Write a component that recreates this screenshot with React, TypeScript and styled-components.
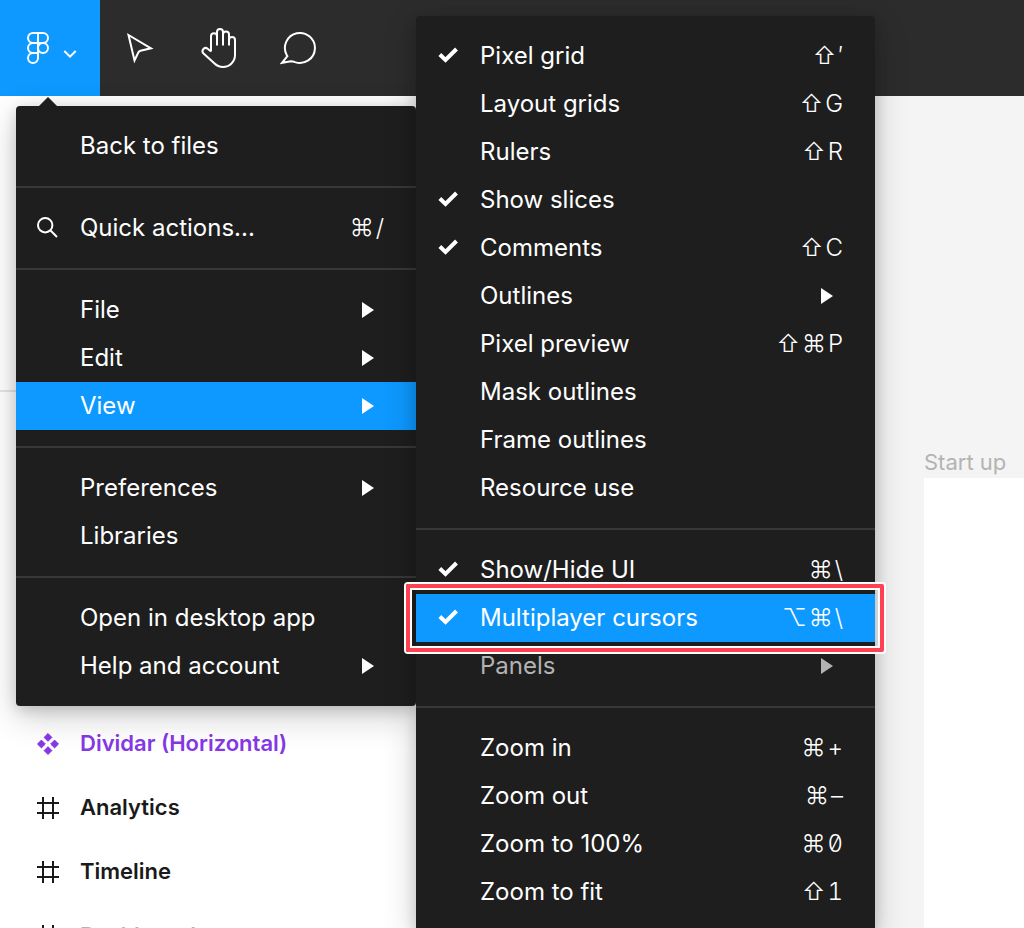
import React from "react";
import styled, { createGlobalStyle, css } from "styled-components";

const GlobalStyle = createGlobalStyle`
  *, *::before, *::after { box-sizing: border-box; }
  body { margin: 0; background: #fff; color: #1a1a1a; font-family: Inter, "Liberation Sans", sans-serif; }
  button { font: inherit; color: inherit; border: 0; background: none; padding: 0; margin: 0; }
`;

const Shell = styled.div`
  position: relative;
  display: flex;
  flex-direction: column;
  height: 100vh;
  overflow: hidden;
`;

const Toolbar = styled.header`
  display: flex;
  flex: none;
  height: 96px;
  background: #2c2c2c;
  color: #fff;
`;

const ToolButton = styled.button<{ $active?: boolean }>`
  display: flex;
  align-items: center;
  justify-content: center;
  gap: 14px;
  width: ${(p) => (p.$active ? 100 : 80)}px;
  padding-left: ${(p) => (p.$active ? 4 : 0)}px;
  background: ${(p) => (p.$active ? "#0d99ff" : "transparent")};
`;

const Workspace = styled.div`
  display: flex;
  flex: 1;
  min-height: 0;
`;

const SidePanel = styled.aside`
  flex: none;
  width: 480px;
  background: #fff;
`;

const Pages = styled.section`
  height: 296px;
  border-bottom: 2px solid #e5e5e5;
`;

const Layers = styled.ul`
  list-style: none;
  margin: 0;
  padding: 320px 0 0;
`;

const Layer = styled.li<{ $tone?: "component" | "faded" }>`
  display: flex;
  align-items: center;
  gap: 20px;
  height: 64px;
  padding-left: 36px;
  font-size: 22px;
  font-weight: 600;
  color: ${(p) => (p.$tone === "component" ? "#8638e5" : "#1a1a1a")};
  span {
    padding-bottom: 2px;
    color: ${(p) => (p.$tone === "faded" ? "#b3b3b3" : "inherit")};
  }
`;

const Canvas = styled.main`
  display: flex;
  flex-direction: column;
  flex: 1;
  min-width: 0;
  padding: 350px 0 0 444px;
  background: #f4f4f4;
`;

const FrameTitle = styled.h2`
  margin: 0;
  font-size: 22px;
  font-weight: 400;
  line-height: 32px;
  color: #b3b3b3;
  white-space: nowrap;
`;

const Artboard = styled.div`
  flex: 1;
  background: #fff;
`;

const Menu = styled.nav<{ $level: "main" | "sub" }>`
  position: absolute;
  background: #1e1e1e;
  color: #fff;
  border-radius: 4px;
  box-shadow: 0 4px 14px rgba(0, 0, 0, 0.15), 0 10px 34px rgba(0, 0, 0, 0.2);
  ${(p) =>
    p.$level === "main"
      ? css`
          top: 106px;
          left: 16px;
          width: 400px;
          &::before {
            content: "";
            position: absolute;
            top: -9px;
            left: 23px;
            border: 9px solid transparent;
            border-top: 0;
            border-bottom-color: #1e1e1e;
          }
        `
      : css`
          top: 16px;
          left: 416px;
          width: 459px;
        `}
`;

const Group = styled.div`
  padding: 16px 0;
  & + & { border-top: 2px solid #383838; }
`;

const Item = styled.button<{ $on?: boolean; $dim?: boolean }>`
  position: relative;
  display: grid;
  grid-template-columns: 64px 1fr auto;
  align-items: center;
  width: 100%;
  height: 48px;
  padding: 0 32px 2px 0;
  text-align: left;
  font-size: 24px;
  font-weight: 400;
  background: ${(p) => (p.$on ? "#0d99ff" : "transparent")};
  color: ${(p) => (p.$dim ? "#b3b3b3" : "#fff")};
`;

const Lead = styled.span`
  display: flex;
  justify-content: center;
`;

const Keys = styled.span`
  display: flex;
  gap: 2px;
  font-weight: 300;
  font-feature-settings: "tnum", "zero";
  kbd { font: inherit; }
`;

const More = styled.svg`
  margin: 2px 10px 0 0;
  display: block;
`;

const Callout = styled.span`
  position: absolute;
  z-index: 1;
  inset: -12px -11px -12px -12px;
  border: 2px solid #fff;
  border-radius: 4px;
  &::before {
    content: "";
    position: absolute;
    inset: 0;
    border: 4px solid #ff4152;
    border-radius: 2px;
  }
  &::after {
    content: "";
    position: absolute;
    inset: 4px;
    border: 2px solid #fff;
  }
`;

const Check = () => (
  <svg width="20" height="16" viewBox="0 0 20 16" fill="none" stroke="#fff" strokeWidth="4">
    <path d="M1.800 7.500 7.500 13 18.500 2" />
  </svg>
);

const Search = () => (
  <svg width="22" height="22" viewBox="0 0 22 22" fill="none" stroke="#fff" strokeWidth="2">
    <circle cx="8.200" cy="9.200" r="7.200" />
    <path d="M13.300 14.300l6.700 6.700" />
  </svg>
);

const FrameIcon = () => (
  <svg width="24" height="24" viewBox="0 0 24 24" stroke="#1a1a1a" strokeWidth="2">
    <path d="M7 1v22M17 1v22M1 7h22M1 17h22" />
  </svg>
);

const ComponentIcon = () => (
  <svg width="24" height="24" viewBox="0 0 24 24" fill="#8638e5" stroke="#8638e5" strokeWidth="1" strokeLinejoin="round">
    <path d="M12 1.500l3.900 3.900L12 9.300 8.100 5.400zM12 14.700l3.900 3.900L12 22.500l-3.900-3.900zM5.400 8.100L9.300 12l-3.900 3.900L1.500 12zM18.600 8.100L22.500 12l-3.900 3.900-3.900-3.900z" />
  </svg>
);

type Entry = {
  label: string;
  keys?: string[];
  more?: boolean;
  checked?: boolean;
  search?: boolean;
  on?: boolean;
  dim?: boolean;
  callout?: boolean;
};

const mainMenu: Entry[][] = [
  [{ label: "Back to files" }],
  [{ label: "Quick actions...", keys: ["⌘", "/"], search: true }],
  [
    { label: "File", more: true },
    { label: "Edit", more: true },
    { label: "View", more: true, on: true },
  ],
  [{ label: "Preferences", more: true }, { label: "Libraries" }],
  [{ label: "Open in desktop app" }, { label: "Help and account", more: true }],
];

const viewMenu: Entry[][] = [
  [
    { label: "Pixel grid", keys: ["⇧", "′"], checked: true },
    { label: "Layout grids", keys: ["⇧", "G"] },
    { label: "Rulers", keys: ["⇧", "R"] },
    { label: "Show slices", checked: true },
    { label: "Comments", keys: ["⇧", "C"], checked: true },
    { label: "Outlines", more: true },
    { label: "Pixel preview", keys: ["⇧", "⌘", "P"] },
    { label: "Mask outlines" },
    { label: "Frame outlines" },
    { label: "Resource use" },
  ],
  [
    { label: "Show/Hide UI", keys: ["⌘", "\\"], checked: true },
    { label: "Multiplayer cursors", keys: ["⌥", "⌘", "\\"], checked: true, on: true, callout: true },
    { label: "Panels", more: true, dim: true },
  ],
  [
    { label: "Zoom in", keys: ["⌘", "+"] },
    { label: "Zoom out", keys: ["⌘", "–"] },
    { label: "Zoom to 100%", keys: ["⌘", "0"] },
    { label: "Zoom to fit", keys: ["⇧", "1"] },
  ],
];

const MenuList = ({ level, groups, label }: { level: "main" | "sub"; groups: Entry[][]; label: string }) => (
  <Menu $level={level} aria-label={label}>
    {groups.map((group, i) => (
      <Group key={i}>
        {group.map((e) => (
          <Item key={e.label} type="button" $on={e.on} $dim={e.dim} disabled={e.dim}>
            <Lead>
              {e.checked && <Check />}
              {e.search && <Search />}
            </Lead>
            <span>{e.label}</span>
            {e.keys && (
              <Keys>
                {e.keys.map((k) => (
                  <kbd key={k}>{k}</kbd>
                ))}
              </Keys>
            )}
            {e.more && (
              <More width="12" height="16" viewBox="0 0 12 16" fill="currentColor">
                <path d="M0 0l12 8-12 8z" />
              </More>
            )}
            {e.callout && <Callout />}
          </Item>
        ))}
      </Group>
    ))}
  </Menu>
);

export default function App() {
  return (
    <Shell>
      <GlobalStyle />
      <Toolbar>
        <ToolButton $active type="button" aria-label="Main menu">
          <svg width="22" height="32" viewBox="0 0 22 32" fill="none" stroke="#fff" strokeWidth="2">
            <path d="M11 1H6a5 5 0 0 0 0 10h5zM11 1h5a5 5 0 0 1 0 10h-5M11 11H6a5 5 0 0 0 0 10h5M11 21H6a5 5 0 1 0 5 5V11" />
            <circle cx="16" cy="16" r="5" />
          </svg>
          <svg width="14" height="20" viewBox="0 0 14 20" fill="none" stroke="#fff" strokeWidth="2">
            <path d="M1.300 13L7 18.600 12.700 13" />
          </svg>
        </ToolButton>
        <ToolButton type="button" aria-label="Move">
          <svg width="40" height="40" viewBox="0 0 40 40" fill="none" stroke="#fff" strokeWidth="2">
            <path d="M8.500 7L31 20.300 20.500 22.800Q19 23.200 18.300 24.500L14.500 32.500Z" />
          </svg>
        </ToolButton>
        <ToolButton type="button" aria-label="Hand">
          <svg width="40" height="44" viewBox="0 0 40 44" fill="none" stroke="#fff" strokeWidth="2">
            <path d="M11 25.500V10.300a3 3 0 0 1 6 0V19.500M17 10.300V6a3 3 0 0 1 6 0V19.500M23 8.500a3 3 0 0 1 6 0V19.500M29 14a3 3 0 0 1 6 0V29a12 12 0 0 1-12 12q-5 0-9-4L3.300 27.300A3.200 3.200 0 0 1 7.700 22.700L11 25.500" />
          </svg>
        </ToolButton>
        <ToolButton type="button" aria-label="Comment">
          <svg width="40" height="40" viewBox="0 0 40 40" fill="none" stroke="#fff" strokeWidth="2">
            <path d="M7.400 28.100L2 34.800 11 33.300Q13 33.300 15 34.100A15 15 0 1 0 6.700 27z" />
          </svg>
        </ToolButton>
      </Toolbar>
      <Workspace>
        <SidePanel>
          <Pages />
          <Layers>
            <Layer $tone="component"><ComponentIcon /><span>Dividar (Horizontal)</span></Layer>
            <Layer><FrameIcon /><span>Analytics</span></Layer>
            <Layer><FrameIcon /><span>Timeline</span></Layer>
            <Layer $tone="faded"><FrameIcon /><span>Dashboard</span></Layer>
          </Layers>
        </SidePanel>
        <Canvas>
          <FrameTitle>Start up</FrameTitle>
          <Artboard />
        </Canvas>
      </Workspace>
      <MenuList level="main" groups={mainMenu} label="Main" />
      <MenuList level="sub" groups={viewMenu} label="View" />
    </Shell>
  );
}
